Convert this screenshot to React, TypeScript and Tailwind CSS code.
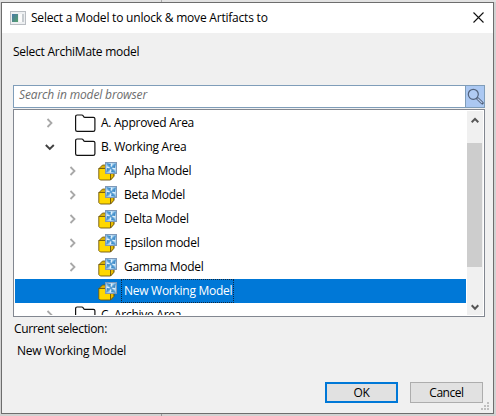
const FONT = "font-['Open_Sans','Noto_Sans',sans-serif] text-[12px]";

function AppIcon() {
  return (
    <svg width="16" height="14" viewBox="0 0 16 14" shapeRendering="crispEdges">
      <defs>
        <linearGradient id="appGlass" x1="0" y1="0" x2="1" y2="1">
          <stop offset="0" stopColor="#4878a8" />
          <stop offset="1" stopColor="#55a06a" />
        </linearGradient>
      </defs>
      <rect x="0" y="0" width="16" height="14" fill="#b9bdc2" />
      <rect x="1" y="1" width="14" height="12" fill="#eef0f2" />
      <rect x="2" y="3" width="6" height="8" fill="url(#appGlass)" />
      <rect x="9" y="3" width="3" height="8" fill="#fbfbfb" />
      <rect x="12" y="3" width="2" height="8" fill="#c7ccd0" />
    </svg>
  );
}

function Folder() {
  return (
    <svg width="22" height="18" viewBox="0 0 22 18" fill="#fff" stroke="#111" strokeWidth="1.2">
      <path d="M.6 2.700Q.6 1 2.300 1H6.600q1.200 0 1.700 1l.3.600q.4.700 1.400.700h8.400Q19.900 3.300 19.900 4.800V15.700q0 1.700-1.700 1.700H2.300Q.6 17.400.6 15.700Z" />
    </svg>
  );
}

function Cube() {
  return (
    <svg width="20" height="20" viewBox="0 0 20 20">
      <path d="M1 7.500L4.500 4H16v11l-3.500 4z" fill="#d9ae08" stroke="#6b5510" strokeWidth=".8" />
      <path d="M.8 7.500H12.500V19H2.300L.8 17.500z" fill="#ffd800" stroke="#6f5810" strokeWidth=".9" />
      <path d="M12.500 8v11l3.300-3.500V8z" fill="#e8bc00" stroke="#6b5510" strokeWidth=".8" />
      <rect x="7.500" y="1.500" width="11" height="11" fill="#a5cfee" stroke="#8099b8" />
      <path d="M8 2l5 1.200V7zM18 2l-1.200 5H13zM18 12l-5-1.200V7zM8 12l1.200-5H13z" fill="#3f8cc9" />
      <path d="M13 7L9 3M13 7l4-4M13 7l4 4M13 7l-4 4" stroke="#5a9fd4" strokeWidth="1.200" />
      <path d="M13.800 2.500L13 5.500M17.500 8l-3-.800M12.200 11.500l.8-3M8.500 6l3 .800" stroke="#e3f1fb" strokeWidth="1.200" />
    </svg>
  );
}

function Chevron({ open }: { open?: boolean }) {
  return open ? (
    <svg width="10" height="8" viewBox="0 0 10 8" fill="none" stroke="#404040" strokeWidth="1.900">
      <path d="M.8 2l4 4 4-4" />
    </svg>
  ) : (
    <svg width="10" height="10" viewBox="0 0 10 10" fill="none" stroke="#a8a8a8" strokeWidth="1.800">
      <path d="M2.500 1l4 4-4 4" />
    </svg>
  );
}

function ScrollArrow({ down }: { down?: boolean }) {
  return (
    <svg width="8" height="7" viewBox="0 0 8 7" fill="none" stroke="#555" strokeWidth="2">
      <path d={down ? "M.7 1.300L4 4.700 7.300 1.300" : "M.7 5.300L4 1.900 7.300 5.300"} />
    </svg>
  );
}

function FolderRow({ name, open }: { name: string; open?: boolean }) {
  return (
    <div className="flex h-6 shrink-0 items-center pl-[30px]">
      <Chevron open={open} />
      <span className="ml-[20px] w-[22px]"><Folder /></span>
      <span className="ml-[4px] whitespace-nowrap tracking-[-0.27px]">{name}</span>
    </div>
  );
}

function ModelRow({ name, selected }: { name: string; selected?: boolean }) {
  return (
    <div className={`flex h-6 shrink-0 items-center pl-[53px] ${selected ? "bg-[#0078d7] text-white" : ""}`}>
      <span className="w-[10px]">{!selected && <Chevron />}</span>
      <span className="ml-[20px]"><Cube /></span>
      <span className={`ml-[3px] flex h-6 items-center whitespace-nowrap border pl-[2px] tracking-[-0.27px] ${selected ? "w-[113px] border-dotted border-[#102840]" : "border-transparent"}`}>
        {name}
      </span>
    </div>
  );
}

export default function App() {
  return (
    <div className={`relative h-[416px] w-[496px] overflow-hidden bg-[#d2d2d2] pl-px pt-[2px] text-black ${FONT}`}>
      <div className="absolute left-0 top-0 h-[2px] w-full bg-[#e2e2e2]" />
      <div className="absolute left-[161px] top-0 h-[2px] w-px bg-[#aaa]" />
      <div className="absolute bottom-0 left-[161px] h-[2px] w-px bg-[#999]" />
      <div className="flex h-[412px] w-[493px] flex-col border border-[#6d6d6d] bg-[#f0f0f0]">
        <header className="flex h-[30px] shrink-0 items-center bg-white pl-[8px] pr-[9px]">
          <AppIcon />
          <span className="ml-[5px] whitespace-nowrap tracking-[-0.21px]">Select a Model to unlock &amp; move Artifacts to</span>
          <svg className="ml-auto -mt-[2px]" width="11" height="11" viewBox="0 0 11 11" stroke="#111" strokeWidth="1.100">
            <path d="M.5.500l10 10M10.500.500l-10 10" />
          </svg>
        </header>
        <div className="flex h-[52px] shrink-0 items-start pl-[11px] pt-[10px] leading-[18px] tracking-[-0.25px]">Select ArchiMate model</div>
        <div className="ml-[11px] flex h-[23px] w-[472px] shrink-0 border border-[#7f9db9] bg-white">
          <span className="flex-1 pl-[5px] italic leading-[17px] tracking-[-0.14px] text-[#6d6d6d]">Search in model browser</span>
          <span className="flex w-[19px] items-center justify-center border-l border-[#7f9db9] bg-[#abc8f2]">
            <svg width="17" height="17" viewBox="0 0 17 17" fill="none">
              <path d="M10.500 10.500l4.700 4.500" stroke="#4b5970" strokeWidth="2.900" strokeLinecap="round" />
              <path d="M10.500 10.500l4.700 4.500" stroke="#b4caed" strokeWidth="1.200" />
              <circle cx="6.300" cy="6.300" r="5" stroke="#53637d" strokeWidth="1.200" fill="#b0cbf3" />
            </svg>
          </span>
        </div>
        <div className="ml-[11px] mt-px flex h-[208px] w-[472px] shrink-0 border border-[#828790] bg-white p-px">
          <div className="flex h-[204px] w-[451px] flex-col overflow-hidden">
            <FolderRow name="A. Approved Area" />
            <FolderRow name="B. Working Area" open />
            <ModelRow name="Alpha Model" />
            <ModelRow name="Beta Model" />
            <ModelRow name="Delta Model" />
            <ModelRow name="Epsilon model" />
            <ModelRow name="Gamma Model" />
            <ModelRow name="New Working Model" selected />
            <FolderRow name="C. Archive Area" />
          </div>
          <div className="ml-px flex h-[204px] w-[16px] flex-col items-center bg-[#f0f0f0]">
            <div className="flex h-[32px] items-start pt-[6px]"><ScrollArrow /></div>
            <div className="h-[124px] w-[15px] self-start bg-[#cdcdcd]" />
            <div className="mt-auto pb-[4px]"><ScrollArrow down /></div>
          </div>
        </div>
        <div className="pl-[12px] pt-[3px] leading-[18px] tracking-[-0.35px]">Current selection:</div>
        <div className="pl-[15px] pt-[4px] leading-[18px] tracking-[-0.22px]">New Working Model</div>
        <div className="mt-auto flex justify-end gap-[12px] pb-[10px] pr-[10px]">
          <button className="flex h-[21px] w-[73px] items-center justify-center border-2 border-[#0078d7] bg-[#e1e1e1] tracking-[-0.3px]">OK</button>
          <button className="flex h-[21px] w-[73px] items-center justify-center border border-[#adadad] bg-[#e1e1e1] tracking-[-0.45px]">Cancel</button>
        </div>
      </div>
      <svg className="absolute left-[481px] top-[402px]" width="8" height="8" fill="#bfbfbf" shapeRendering="crispEdges">
        <path d="M6 0h2v2h-2zM3 3h2v2h-2zM6 3h2v2h-2zM0 6h2v2h-2zM3 6h2v2h-2zM6 6h2v2h-2z" />
      </svg>
    </div>
  );
}
